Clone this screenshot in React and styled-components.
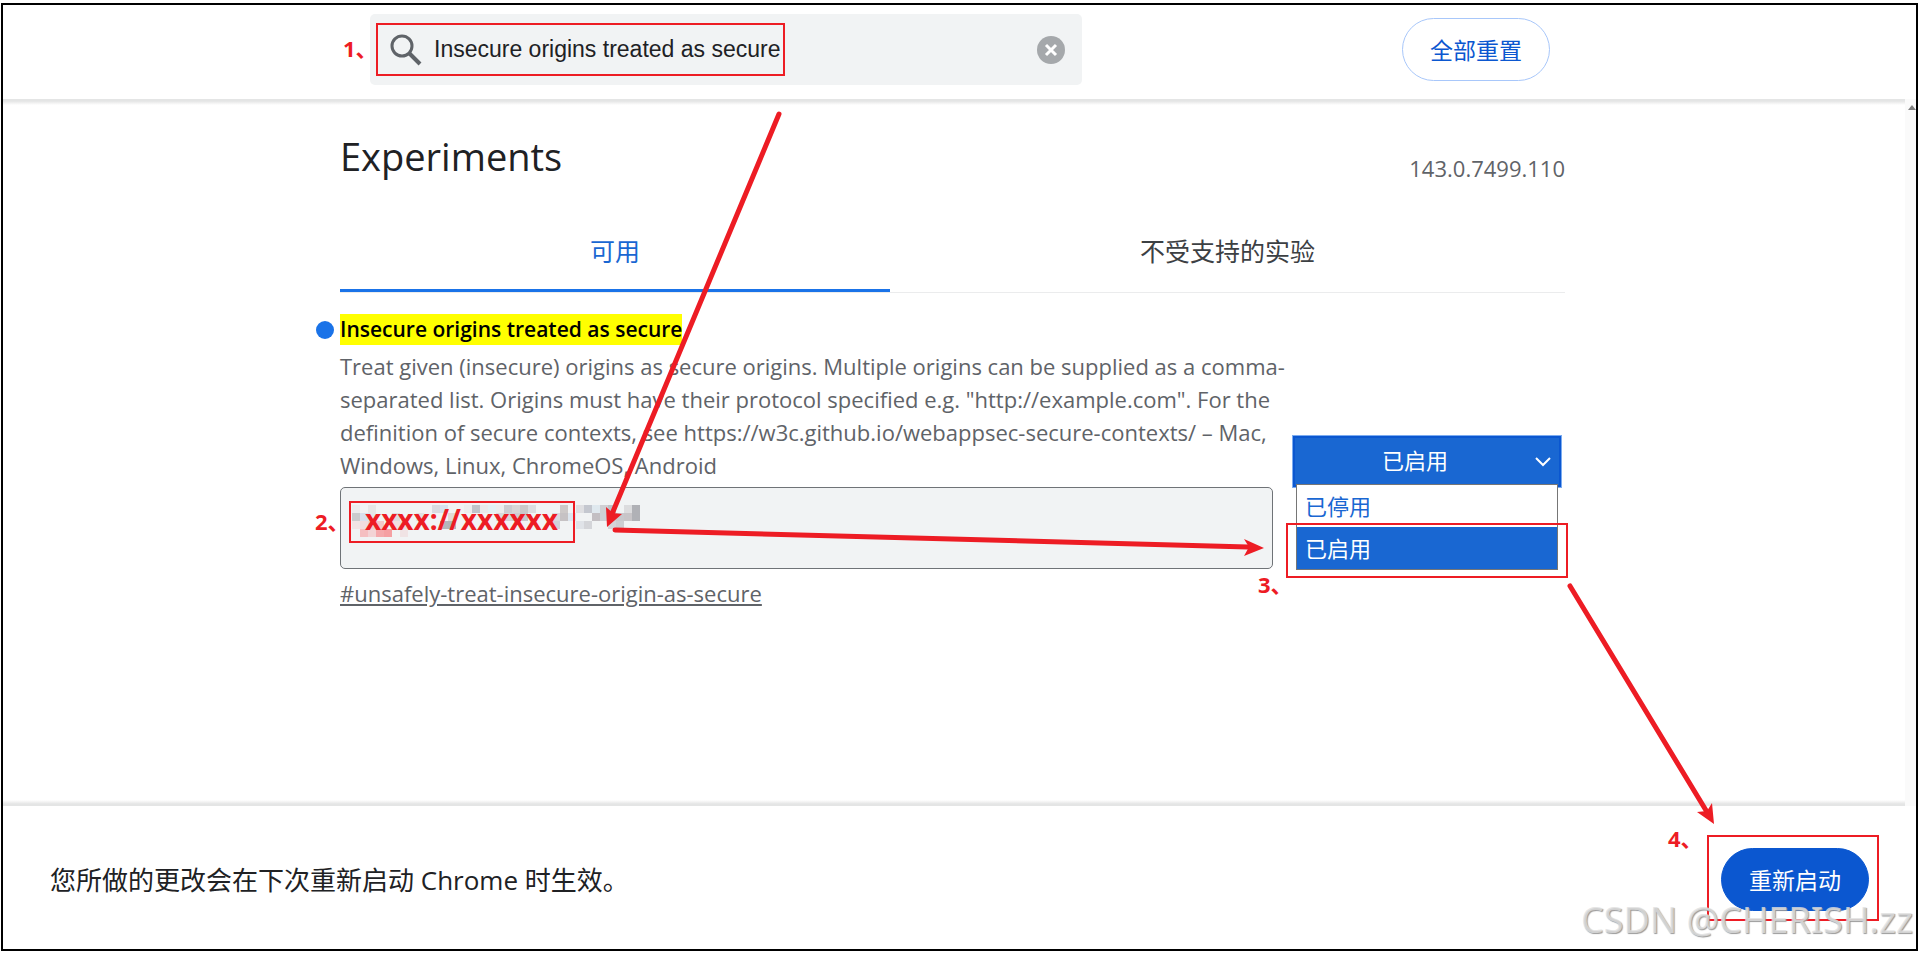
import React from 'react';
import styled, { createGlobalStyle } from 'styled-components';

const ui = '"Open Sans", "Noto Sans CJK SC", sans-serif';
const red = '#ed1c24';

const GlobalStyle = createGlobalStyle`
  * { box-sizing: border-box; }
  body { margin: 0; background: #fff; font-family: ${ui}; color: #202124; }
`
const Page = styled.div`
  position: relative;
  min-height: 100vh;
  padding: 3px 2px 2px 1px;
  display: flex;
  overflow: hidden;
`
const Frame = styled.div`
  flex: 1;
  display: flex;
  flex-direction: column;
  border: 2px solid #000;
`
const Header = styled.header`
  display: flex;
  align-items: center;
  justify-content: space-between;
  padding: 9px 366px 14px 367px;
`
const SearchBox = styled.label`
  display: flex;
  align-items: center;
  width: 712px;
  height: 71px;
  padding: 0 16px 0 19px;
  border-radius: 5px;
  background: #f1f3f4;
`
const SearchInput = styled.input`
  flex: 1;
  min-width: 0;
  margin-left: 9px;
  padding: 0;
  border: none;
  outline: none;
  background: none;
  color: #202124;
  font: 23px "Liberation Sans", sans-serif;
`
const ClearButton = styled.button`
  display: flex;
  padding: 0;
  border: none;
  background: none;
`
const PillButton = styled.button`
  height: 63px;
  padding: 0 27px 2px;
  border-radius: 32px;
  border: 1px solid ${props => props.$primary ? '#0b57d0' : '#a8c7fa'};
  background: ${props => props.$primary ? '#0b57d0' : '#fff'};
  color: ${props => props.$primary ? '#fff' : '#0b57d0'};
  font: 23px ${ui};
`
const Body = styled.div`
  flex: 1;
  display: flex;
`
const Scroller = styled.main`
  flex: 1;
  padding: 0 340px 0 337px;
  background:
    linear-gradient(#e4e5e5 2px, #fff) top / 100% 6px no-repeat,
    linear-gradient(#fff, #e4e5e5 4px) bottom / 100% 6px no-repeat;
`
const ScrollTrack = styled.div`
  display: flex;
  justify-content: flex-end;
  width: 11px;
  padding-top: 6px;
  background: #fafafa;
`
const TitleRow = styled.div`
  display: flex;
  justify-content: space-between;
  padding-top: 27px;
`
const Title = styled.h1`
  margin: 0;
  font-size: 38px;
  line-height: 60px;
  font-weight: 400;
`
const Version = styled.span`
  align-self: flex-end;
  color: #5f6368;
  font-size: 22px;
  line-height: 36px;
`
const Tabs = styled.div`
  display: flex;
  margin-top: 24px;
  border-bottom: 1px solid #ebeced;
`
const Tab = styled.button`
  flex: 1 1 auto;
  height: 82px;
  padding: 0;
  border: none;
  border-bottom: 3px solid ${props => props.$active ? '#1a73e8' : 'transparent'};
  background: none;
  color: ${props => props.$active ? '#1967d2' : '#3c4043'};
  font: 25px ${ui};
`
const Experiment = styled.section`
  display: flex;
  align-items: center;
  justify-content: space-between;
  padding-top: 21px;
`
const Details = styled.div`
  width: 933px;
`
const FlagName = styled.h2`
  display: flex;
  align-items: center;
  margin: 0 0 0 -24px;
  font-size: 21px;
  line-height: 31px;
  font-weight: 600;
  color: #000;
`
const Dot = styled.span`
  width: 18px;
  height: 18px;
  margin-right: 6px;
  border-radius: 50%;
  background: #1a73e8;
`
const Mark = styled.mark`
  background: #ff0;
`
const Description = styled.p`
  margin: 5px 0;
  color: #5f6368;
  font-size: 22px;
  line-height: 33px;
  white-space: nowrap;
`
const Origins = styled.textarea`
  display: block;
  width: 100%;
  height: 82px;
  border: 1px solid #6f7377;
  border-radius: 5px;
  background: #f1f3f4;
  resize: none;
`
const Permalink = styled.a`
  display: inline-block;
  margin-top: 8px;
  color: #5f6368;
  font-size: 22px;
  line-height: 33px;
`
const Picker = styled.div`
  position: relative;
  width: 270px;
  margin: 0 3px 2px 0;
`
const Select = styled.select`
  appearance: none;
  display: block;
  width: 100%;
  height: 53px;
  padding: 0 24px 2px 0;
  border: 3px solid #0b57d0;
  outline: 1px solid #7cacf0;
  outline-offset: -1px;
  border-radius: 0;
  background: #1967d2;
  color: #fff;
  font: 22px ${ui};
  text-align-last: center;
`
const Chevron = styled.svg`
  position: absolute;
  right: 11px;
  top: 21px;
`
const Options = styled.ul`
  position: absolute;
  top: 49px;
  left: 4px;
  right: 4px;
  margin: 0;
  padding: 0;
  list-style: none;
  border: 1px solid #767676;
  background: #fff;
`
const Option = styled.li`
  padding-left: 8px;
  font-size: 22px;
  line-height: 42px;
  color: ${props => props.$selected ? '#fff' : '#1967d2'};
  background: ${props => props.$selected ? '#1967d2' : '#fff'};
`
const Footer = styled.footer`
  display: flex;
  align-items: center;
  justify-content: space-between;
  height: 143px;
  padding: 4px 47px 0;
  font-size: 26px;
`
const Hint = styled.span`
  padding-bottom: 2px;
`
// annotations drawn over the page
const Drawing = styled.svg`
  position: absolute;
  left: 0;
  top: 0;
  pointer-events: none;
`
const Box = styled.div`
  position: absolute;
  left: ${props => props.$x}px;
  top: ${props => props.$y}px;
  width: ${props => props.$w}px;
  height: ${props => props.$h}px;
  border: 2px solid ${red};
  pointer-events: none;
`
const Note = styled.span`
  position: absolute;
  left: ${props => props.$x}px;
  top: ${props => props.$y}px;
  color: ${red};
  font-family: "Noto Sans", "Noto Sans CJK SC", sans-serif;
  font-size: ${props => props.$big ? 28 : 22}px;
  line-height: 32px;
  font-weight: 700;
  white-space: nowrap;
  pointer-events: none;
`
const Watermark = styled.span`
  position: absolute;
  left: 1581px;
  top: 900px;
  color: rgba(225, 225, 225, 0.8);
  text-shadow: 1px 1px 1px #999;
  font: 36px/40px "Noto Sans", sans-serif;
  white-space: nowrap;
  pointer-events: none;
`

const boxes = [
  [376, 23, 409, 53],
  [349, 501, 226, 42],
  [1286, 523, 282, 55],
  [1707, 835, 172, 86],
];
const steps = [
  ['1、', 343, 32],
  ['2、', 315, 505],
  ['3、', 1258, 568],
  ['4、', 1668, 822],
];

// censored value: column -> colour for each row of 8px blocks
const CELL = 8;
const mosaic = [
  {
    0: '#ebebec', 2: '#e6e6e6', 10: '#d9dbe0', 11: '#d7e1f0', 14: '#ecedee', 15: '#c0c3c9', 16: '#e9eaec',
    17: '#e3f1f4', 18: '#eceded', 19: '#ccccd0', 20: '#d8d6d6', 21: '#cbc8c8', 22: '#dcdde0', 26: '#cdc9c8',
    28: '#dfdfe2', 29: '#c4c7cf', 30: '#dfe8ee', 31: '#cfcfd3', 32: '#bfc2c8', 34: '#dcdcde', 35: '#b0b1b6',
  },
  {
    0: '#cacbcd', 1: '#d9e0ed', 2: '#e4e6ea', 5: '#ddddde', 8: '#e2e2e4', 12: '#e3dbd5', 18: '#d8dadd',
    19: '#d4d4d8', 20: '#cfcdd0', 21: '#c6c8cc', 25: '#d8dadd', 26: '#c6c2c4', 27: '#dce5ee', 30: '#c3bfc3',
    31: '#cdd0d5', 32: '#d0ccd0', 33: '#c8c8cc', 34: '#c8c5c8', 35: '#b0b1b6',
  },
  {
    0: '#f1e4e5', 1: '#f1dcdd', 2: '#eccfd0', 3: '#f3c9ca', 5: '#f0dfe0', 6: '#efdcdd', 11: '#b4b7bb',
    12: '#b4b5b9', 25: '#d0d2d8', 28: '#e0e3e8', 29: '#d4d5d9', 32: '#d4d4d8', 33: '#cdcdd1',
  },
  { 1: '#f5bfc1', 2: '#f3d3d5', 3: '#f5a9ac', 4: '#f5a0a3', 6: '#f0e3e4' },
];

const Mosaic = () => (
  <Drawing width="1920" height="953">
    {mosaic.map((row, y) => Object.entries(row).map(([x, fill]) => (
      <rect key={`${x}-${y}`} x={352 + x * CELL} y={505 + y * CELL} width={CELL} height={CELL} fill={fill} />
    )))}
  </Drawing>
);

const Arrows = () => (
  <Drawing width="1920" height="953" fill={red} stroke={red} strokeLinecap="round">
    <path d="M779 114 612 514M615 530l633 17M1570 586l137 226" strokeWidth="5" fill="none" />
    <path d="M606 507l1 20 15-13-9-1zM1244 539l20 9-20 8 5-9zM1697 812l17 12-2-21-5 8z" strokeWidth="0" />
  </Drawing>
);

const App = () => (
  <>
    <GlobalStyle />
    <Page>
      <Frame>
        <Header>
          <SearchBox>
            <svg width="36" height="36" viewBox="0 0 36 36" fill="none" stroke="#5f6368" aria-hidden="true">
              <circle cx="13" cy="14" r="10" strokeWidth="3" />
              <path d="M20 21l11 11" strokeWidth="4" />
            </svg>
            <SearchInput type="text" aria-label="Search flags" defaultValue="Insecure origins treated as secure" />
            <ClearButton aria-label="Clear search">
              <svg width="30" height="30" viewBox="0 0 30 30">
                <circle cx="15" cy="15" r="14" fill="#a5a8ab" />
                <path d="M10 10l10 10M20 10L10 20" stroke="#fff" strokeWidth="3" />
              </svg>
            </ClearButton>
          </SearchBox>
          <PillButton>全部重置</PillButton>
        </Header>
        <Body>
          <Scroller>
            <TitleRow>
              <Title>Experiments</Title>
              <Version>143.0.7499.110</Version>
            </TitleRow>
            <Tabs role="tablist">
              <Tab role="tab" aria-selected="true" $active>可用</Tab>
              <Tab role="tab" aria-selected="false">不受支持的实验</Tab>
            </Tabs>
            <Experiment>
              <Details>
                <FlagName><Dot /><Mark>Insecure origins treated as secure</Mark></FlagName>
                <Description>
                  Treat given (insecure) origins as secure origins. Multiple origins can be supplied as a comma-<br />
                  separated list. Origins must have their protocol specified e.g. "http://example.com". For the<br />
                  definition of secure contexts, see https://w3c.github.io/webappsec-secure-contexts/ – Mac,<br />
                  Windows, Linux, ChromeOS, Android
                </Description>
                <Origins aria-label="Origins" />
                <Permalink href="#unsafely-treat-insecure-origin-as-secure">#unsafely-treat-insecure-origin-as-secure</Permalink>
              </Details>
              <Picker>
                <Select aria-label="Experiment state" defaultValue="on">
                  <option value="off">已停用</option>
                  <option value="on">已启用</option>
                </Select>
                <Chevron width="16" height="12" fill="none" stroke="#fff" strokeWidth="2">
                  <path d="M1 2l7 7 7-7" />
                </Chevron>
                <Options role="listbox">
                  <Option role="option">已停用</Option>
                  <Option role="option" $selected>已启用</Option>
                </Options>
              </Picker>
            </Experiment>
          </Scroller>
          <ScrollTrack>
            <svg width="8" height="5" fill="#7f7f7f"><path d="M0 5l4-5 4 5z" /></svg>
          </ScrollTrack>
        </Body>
        <Footer>
          <Hint>您所做的更改会在下次重新启动 Chrome 时生效。</Hint>
          <PillButton $primary>重新启动</PillButton>
        </Footer>
      </Frame>
      <Mosaic />
      {boxes.map(([x, y, w, h]) => <Box key={x} $x={x} $y={y} $w={w} $h={h} />)}
      {steps.map(([text, x, y]) => <Note key={text} $x={x} $y={y}>{text}</Note>)}
      <Note $big $x={365} $y={503}>xxxx://xxxxxx</Note>
      <Arrows />
      <Watermark>CSDN @CHERISH.zz</Watermark>
    </Page>
  </>
);
export default App
